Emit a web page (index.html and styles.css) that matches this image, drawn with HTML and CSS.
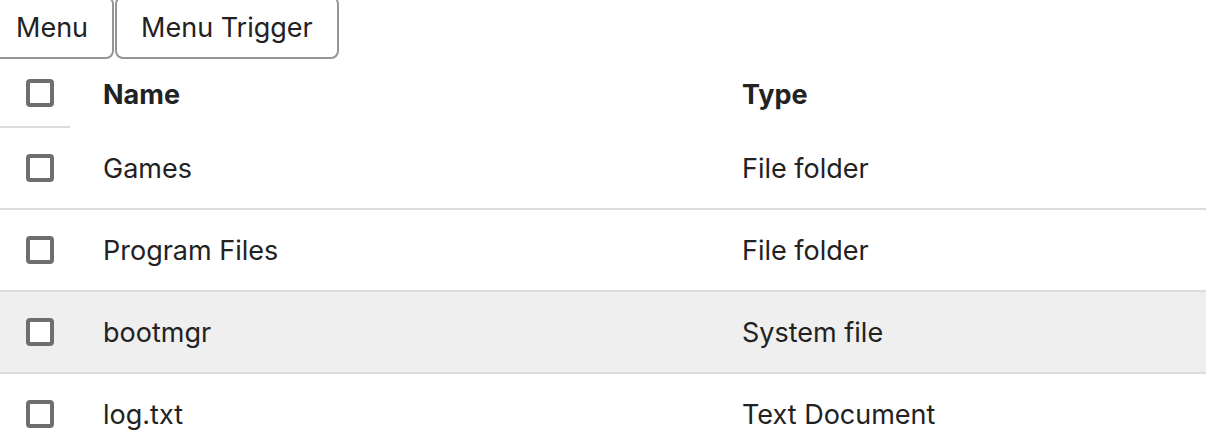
FILE: index.html
```html
<!DOCTYPE html>
<html lang="en">
<head>
<meta charset="utf-8">
<title>Files</title>
<link rel="stylesheet" href="styles.css">
</head>
<body>
<div class="toolbar">
  <button class="btn">Menu</button>
  <button class="btn">Menu Trigger</button>
</div>
<div class="grid">
  <div class="row head">
    <div class="cell check hline"><span class="box"></span></div>
    <div class="cell name">Name</div>
    <div class="cell type">Type</div>
  </div>
  <div class="row body">
    <div class="cell check"><span class="box"></span></div>
    <div class="cell name">Games</div>
    <div class="cell type">File folder</div>
  </div>
  <div class="row body">
    <div class="cell check"><span class="box"></span></div>
    <div class="cell name">Program Files</div>
    <div class="cell type">File folder</div>
  </div>
  <div class="row body hover">
    <div class="cell check"><span class="box"></span></div>
    <div class="cell name">bootmgr</div>
    <div class="cell type">System file</div>
  </div>
  <div class="row body">
    <div class="cell check"><span class="box"></span></div>
    <div class="cell name">log.txt</div>
    <div class="cell type">Text Document</div>
  </div>
</div>
</body>
</html>
```

FILE: styles.css
```css
html, body {
  margin: 0;
  padding: 0;
  background: #ffffff;
  overflow: hidden;
}
body {
  font-family: Inter, "Noto Sans", "Liberation Sans", sans-serif;
  color: #222222;
}
.toolbar {
  display: flex;
  gap: 1px;
  margin: -4px 0 0 -10px;
}
.btn {
  font-family: Inter, "Noto Sans", "Liberation Sans", sans-serif;
  font-size: 27px;
  line-height: 33px;
  color: #222222;
  background: #ffffff;
  border: 2px solid #959595;
  border-radius: 8px;
  padding: 13px 24px;
  margin: 0;
}
.row {
  display: grid;
  grid-template-columns: 70px 640px 1fr;
}
.cell {
  display: flex;
  align-items: center;
}
.head .cell {
  height: 67px;
  font-size: 27px;
  font-weight: 700;
}
.head .hline {
  border-bottom: 2px solid #dcdcdc;
}
.head .name, .head .type {
  padding-top: 2px;
}
.body .cell {
  height: 80px;
  font-size: 27px;
  border-bottom: 2px solid #dcdcdc;
}
.hover {
  background: #efefef;
}
.check {
  padding-left: 26px;
}
.name {
  padding-left: 33px;
}
.type {
  padding-left: 32px;
}
.box {
  display: block;
  width: 28px;
  height: 28px;
  box-sizing: border-box;
  border: 4px solid #6e6e6e;
  border-radius: 4px;
  background: #ffffff;
}
```
